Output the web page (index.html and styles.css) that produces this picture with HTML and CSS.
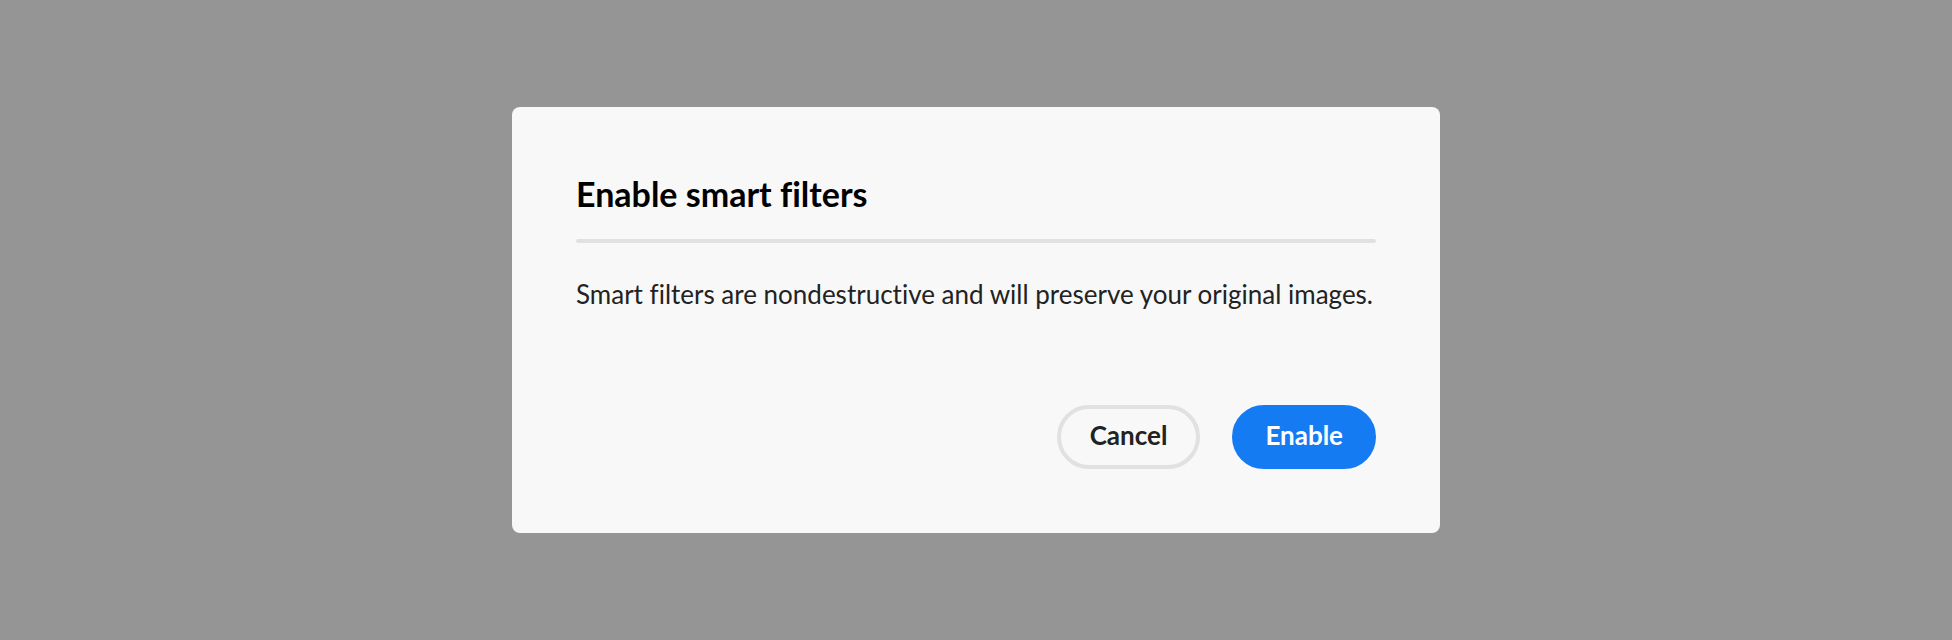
FILE: index.html
```html
<!DOCTYPE html>
<html lang="en">
<head>
<meta charset="utf-8">
<title>Enable smart filters</title>
<link rel="stylesheet" href="styles.css">
</head>
<body>
<div class="underlay">
  <section class="dialog" role="dialog" aria-labelledby="dlg-title">
    <h2 class="dialog-title" id="dlg-title">Enable smart filters</h2>
    <hr class="dialog-divider">
    <p class="dialog-content">Smart filters are nondestructive and will preserve your original images.</p>
    <div class="dialog-buttons">
      <button class="btn btn-secondary" type="button">Cancel</button>
      <button class="btn btn-cta" type="button">Enable</button>
    </div>
  </section>
</div>
</body>
</html>
```
FILE: styles.css
```css
html, body {
  margin: 0;
  padding: 0;
  height: 100%;
}

body {
  background: #959595;
  font-family: "Lato", "Noto Sans", sans-serif;
  font-variant-ligatures: none;
}

.underlay {
  height: 100%;
  display: flex;
  align-items: center;
  justify-content: center;
}

.dialog {
  box-sizing: border-box;
  width: 928px;
  padding: 64px;
  background: #f8f8f8;
  border-radius: 8px;
  display: flex;
  flex-direction: column;
}

.dialog-title {
  margin: 0;
  font-size: 34px;
  line-height: 46px;
  font-weight: 700;
  color: #000;
}

.dialog-divider {
  margin: 22px 0 0;
  border: 0;
  height: 4px;
  border-radius: 2px;
  background: #e1e1e1;
}

.dialog-content {
  margin: 33px 0 0;
  font-size: 26px;
  line-height: 36px;
  color: #222;
  white-space: nowrap;
}

.dialog-buttons {
  margin-top: 93px;
  display: flex;
  justify-content: flex-end;
  gap: 32px;
}

.btn {
  box-sizing: border-box;
  height: 64px;
  padding: 0 29px 4px;
  border-radius: 32px;
  border: 4px solid transparent;
  font-family: inherit;
  font-size: 26px;
  line-height: 52px;
  font-weight: 700;
  font-variant-ligatures: none;
  cursor: pointer;
}

.btn-secondary {
  background: transparent;
  border-color: #e1e1e1;
  color: #222;
}

.btn-cta {
  background: #157bf2;
  border-color: #157bf2;
  color: #fff;
}
```
